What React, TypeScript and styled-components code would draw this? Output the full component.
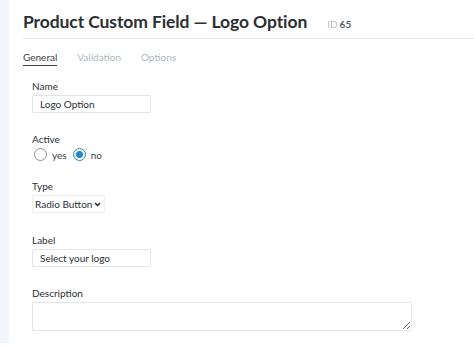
import React, { useState } from "react";
import styled, { createGlobalStyle } from "styled-components";

const GlobalStyle = createGlobalStyle`
  html, body {
    margin: 0;
    padding: 0;
    background: #fff;
  }
  body {
    font-family: "Lato", "Liberation Sans", sans-serif;
    color: #2b2f33;
  }
  * {
    box-sizing: border-box;
  }
`;

const Page = styled.div`
  display: flex;
  width: 474px;
  height: 347px;
  overflow: hidden;
`;

const Sidebar = styled.div`
  width: 9px;
  height: 343px;
  background: #f2f6fa;
  flex-shrink: 0;
`;

const Main = styled.div`
  flex: 1;
  padding: 11px 0 0 14px;
`;

const Header = styled.div`
  display: flex;
  align-items: baseline;
  gap: 20px;
  padding-bottom: 6px;
  border-bottom: 1.5px solid #e6e9ec;
`;

const Title = styled.h1`
  margin: 0;
  font-size: 17.5px;
  line-height: 1.2;
  letter-spacing: -0.1px;
  font-weight: 700;
  color: #2b2f33;
`;

const IdTag = styled.span`
  font-size: 10px;
  color: #b5bcc4;
  b {
    font-weight: 700;
    color: #555b61;
    margin-left: 2px;
  }
`;

const Tabs = styled.div`
  display: flex;
  gap: 20px;
  margin-top: 12px;
`;

const Tab = styled.span<{ $active?: boolean }>`
  font-size: 10px;
  color: ${(p) => (p.$active ? "#3a3f44" : "#aeb8c3")};
  padding-bottom: 2px;
  border-bottom: 1.5px solid ${(p) => (p.$active ? "#3a3f44" : "transparent")};
`;

const Form = styled.div`
  display: flex;
  flex-direction: column;
  padding: 14px 0 0 9px;
`;

const Field = styled.div<{ $top?: number }>`
  display: flex;
  flex-direction: column;
  align-items: flex-start;
  gap: 3px;
  margin-top: ${(p) => p.$top ?? 20}px;
`;

const Label = styled.label`
  font-size: 10px;
  color: #2b2f33;
`;

const TextInput = styled.input`
  width: 119px;
  height: 18px;
  border: 1px solid #e3e6e9;
  border-radius: 2px;
  padding: 0 7px;
  font-family: inherit;
  font-size: 10px;
  color: #2b2f33;
  outline: none;
`;

const TextArea = styled.textarea`
  width: 380px;
  height: 29px;
  border: 1px solid #e3e6e9;
  border-radius: 2px;
  font-family: inherit;
  font-size: 10px;
  outline: none;
  resize: vertical;
  margin: 0;
`;

const Select = styled.select`
  appearance: none;
  height: 18px;
  border: 1px solid #eceef0;
  border-radius: 2px;
  background: #fff
    url("data:image/svg+xml,%3Csvg xmlns='http://www.w3.org/2000/svg' width='7' height='5' viewBox='0 0 7 5'%3E%3Cpath d='M1 1l2.5 2.5L6 1' fill='none' stroke='%23222' stroke-width='1.5'/%3E%3C/svg%3E")
    no-repeat right 3px center;
  font-family: inherit;
  font-size: 10px;
  color: #2b2f33;
  padding: 0 11px 0 2px;
  outline: none;
`;

const RadioRow = styled.div`
  display: flex;
  align-items: center;
  gap: 6px;
  padding-left: 2px;
`;

const RadioOption = styled.label`
  display: flex;
  align-items: center;
  gap: 5px;
  font-size: 10px;
  color: #3a3f44;
`;

const RadioCircle = styled.span<{ $checked?: boolean }>`
  width: 13px;
  height: 13px;
  border-radius: 50%;
  border: 1px solid ${(p) => (p.$checked ? "#2a86c6" : "#8c9299")};
  display: flex;
  align-items: center;
  justify-content: center;
  &::after {
    content: "";
    width: 7px;
    height: 7px;
    border-radius: 50%;
    background: ${(p) => (p.$checked ? "#2a86c6" : "transparent")};
  }
`;

export default function App() {
  const [active, setActive] = useState<"yes" | "no">("no");

  return (
    <>
      <GlobalStyle />
      <Page>
        <Sidebar />
        <Main>
          <Header>
            <Title>Product Custom Field — Logo Option</Title>
            <IdTag>
              ID<b>65</b>
            </IdTag>
          </Header>
          <Tabs>
            <Tab $active>General</Tab>
            <Tab>Validation</Tab>
            <Tab>Options</Tab>
          </Tabs>
          <Form>
            <Field $top={0}>
              <Label>Name</Label>
              <TextInput defaultValue="Logo Option" />
            </Field>
            <Field $top={20}>
              <Label>Active</Label>
              <RadioRow>
                <RadioOption onClick={() => setActive("yes")}>
                  <RadioCircle $checked={active === "yes"} />
                  yes
                </RadioOption>
                <RadioOption onClick={() => setActive("no")}>
                  <RadioCircle $checked={active === "no"} />
                  no
                </RadioOption>
              </RadioRow>
            </Field>
            <Field $top={19}>
              <Label>Type</Label>
              <Select defaultValue="radio">
                <option value="radio">Radio Button</option>
                <option value="checkbox">Checkbox</option>
                <option value="dropdown">Dropdown</option>
              </Select>
            </Field>
            <Field $top={21}>
              <Label>Label</Label>
              <TextInput defaultValue="Select your logo" />
            </Field>
            <Field $top={20}>
              <Label>Description</Label>
              <TextArea />
            </Field>
          </Form>
        </Main>
      </Page>
    </>
  );
}
